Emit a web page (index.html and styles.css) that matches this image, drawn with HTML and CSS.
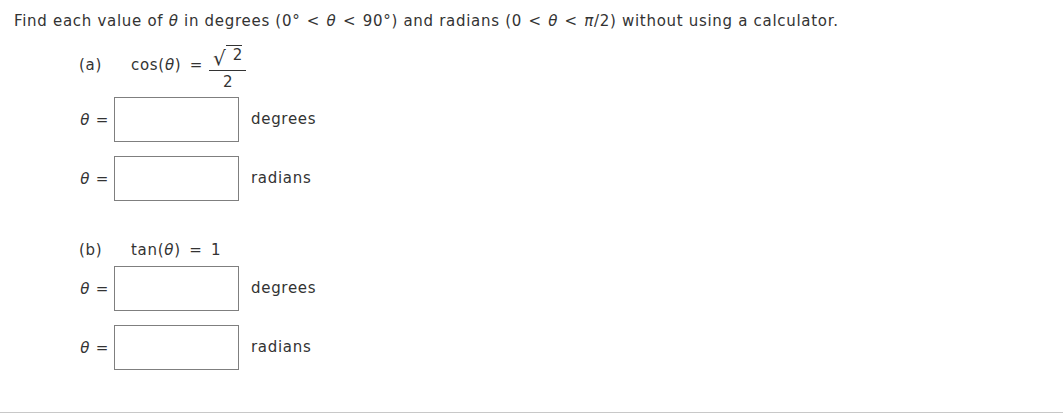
FILE: index.html
```html
<!DOCTYPE html>
<html>
<head>
<meta charset="utf-8">
<link rel="stylesheet" href="styles.css">
</head>
<body>
<div class="q">
  <p class="prompt">Find each value of <i class="v">θ</i> in degrees (0° <span class="op">&lt;</span> <i class="v">θ</i> <span class="op">&lt;</span> 90°) and radians (0 <span class="op">&lt;</span> <i class="v">θ</i> <span class="op">&lt;</span> <i class="v">π</i>/2) without using a calculator.</p>

  <div class="part">
    <div class="part-head head-a">
      <span class="label">(a)</span><span class="expr">cos(<i class="v">θ</i>) <span class="eq eq-frac">=</span><span class="frac"><span class="num"><span class="rad">√</span><span class="radicand">2</span></span><span class="den">2</span></span></span>
    </div>
    <div class="ans-row">
      <span class="lhs"><i class="v">θ</i> =</span>
      <span class="box"></span>
      <span class="unit">degrees</span>
    </div>
    <div class="ans-row">
      <span class="lhs"><i class="v">θ</i> =</span>
      <span class="box"></span>
      <span class="unit">radians</span>
    </div>
  </div>

  <div class="part">
    <div class="part-head head-b">
      <span class="label">(b)</span><span class="expr">tan(<i class="v">θ</i>) <span class="eq">=</span> 1</span>
    </div>
    <div class="ans-row">
      <span class="lhs"><i class="v">θ</i> =</span>
      <span class="box"></span>
      <span class="unit">degrees</span>
    </div>
    <div class="ans-row">
      <span class="lhs"><i class="v">θ</i> =</span>
      <span class="box"></span>
      <span class="unit">radians</span>
    </div>
  </div>
</div>
</body>
</html>
```

FILE: styles.css
```css
html, body {
  margin: 0;
  padding: 0;
  background: #fff;
}

body {
  font-family: "DejaVu Sans", Verdana, sans-serif;
  font-size: 15px;
  line-height: 18px;
  letter-spacing: 0.7px;
  color: #333;
}

.q {
  padding: 12px 0 42px 14px;
  border-bottom: 1px solid #c8c8c8;
}

.prompt {
  margin: 0;
}

.v {
  font-style: italic;
}

.op {
  margin: 0 1px;
}

.part-head {
  padding-left: 65px;
}

.label {
  display: inline-block;
  width: 52px;
}

.eq {
  margin: 0 3px;
}

.eq-frac {
  margin: 0 6px 0 3px;
}

.head-a {
  margin-top: 15px;
}

.frac {
  display: inline-flex;
  flex-direction: column;
  align-items: stretch;
  vertical-align: 5px;
}

.num {
  display: flex;
  align-items: flex-end;
  padding: 0 4px 6px 4px;
  border-bottom: 1px solid #333;
}

.rad {
  font-size: 20px;
  line-height: 20px;
  letter-spacing: 0;
  margin-bottom: -4px;
}

.radicand {
  border-top: 1px solid #333;
  padding: 1px 0 0 7px;
  line-height: 17px;
  letter-spacing: 0;
}

.den {
  line-height: 18px;
  padding-top: 2px;
  text-align: center;
  letter-spacing: 0;
}

.ans-row {
  display: flex;
  align-items: center;
  padding-left: 66px;
  margin-top: 14px;
}

.head-a + .ans-row {
  margin-top: 6px;
}

.head-b {
  margin-top: 40px;
}

.head-b + .ans-row {
  margin-top: 7px;
}

.lhs {
  width: 34px;
  text-align: right;
  padding-right: 5px;
  box-sizing: border-box;
}

.box {
  width: 125px;
  height: 45px;
  box-sizing: border-box;
  border: 1.5px solid #7f7f7f;
}

.unit {
  margin-left: 12px;
  margin-top: -1px;
}
```
